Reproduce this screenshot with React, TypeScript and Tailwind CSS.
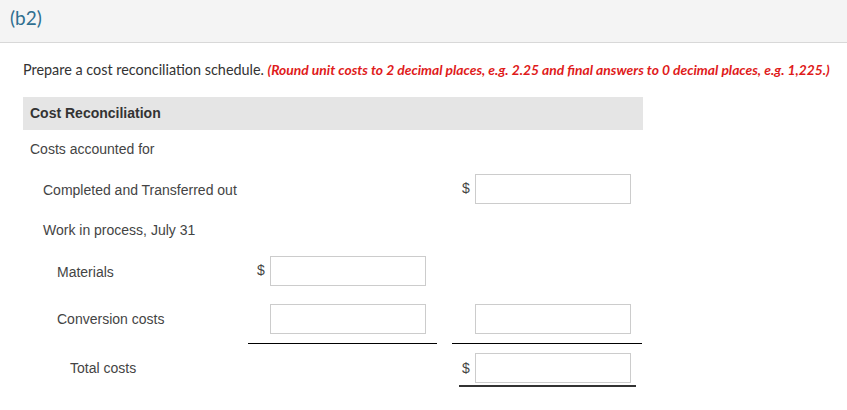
const label = 'font-["Liberation_Sans",Arial,sans-serif] text-[14px] text-[#444]'
const box = 'block h-[30px] w-[156px] border border-[#cccccc] bg-white'

function Money({ dollar }: { dollar?: boolean }) {
  return (
    <div className="flex items-center">
      <span className={`${label} w-[13px] text-[13px]`}>{dollar ? '$' : ''}</span>
      <input className={box} />
    </div>
  )
}

export default function App() {
  return (
    <div className="min-h-screen bg-white">
      <div className="h-[43px] border-b border-[#d8d8d8] bg-[#f4f4f4] pl-[10px] pt-[4px]">
        <span className='font-["Lato",sans-serif] text-[19px] text-[#2f6f90]'>(b2)</span>
      </div>

      <p className='pl-[23px] pt-[17px] font-["Lato",sans-serif] text-[14px] leading-[20px] text-[#333]'>
        <span className="text-[14.4px]">Prepare a cost reconciliation schedule.</span>{' '}
        <em className="text-[13.85px] font-bold text-[#e01b1b]">
          (Round unit costs to 2 decimal places, e.g. 2.25 and final answers to 0 decimal places, e.g. 1,225.)
        </em>
      </p>

      <div className="ml-[23px] mt-[17px] w-[620px]">
        <div className="flex h-[33px] items-center bg-[#e5e5e5] pl-[7px]">
          <span className='font-["Liberation_Sans",Arial,sans-serif] text-[14px] font-bold text-[#333]'>Cost Reconciliation</span>
        </div>

        <div className="flex h-[38px] items-center pl-[7px]">
          <span className={label}>Costs accounted for</span>
        </div>

        <div className="flex h-[41px] items-center">
          <div className="w-[439px] pl-[20px]">
            <span className={label}>Completed and Transferred out</span>
          </div>
          <Money dollar />
        </div>

        <div className="flex h-[41px] items-center pl-[20px] pt-[2px]">
          <span className={label}>Work in process, July 31</span>
        </div>

        <div className="flex h-[41px] items-center">
          <div className="w-[225px] pl-[34px]">
            <span className={label}>Materials</span>
          </div>
          <div className="pl-[9px]">
            <Money dollar />
          </div>
        </div>

        <div className="flex h-[53px]">
          <div className="flex w-[225px] items-center pl-[34px] pt-[3px]">
            <span className={label}>Conversion costs</span>
          </div>
          <div className="w-[189px] border-b border-black pl-[9px] pt-[13px]">
            <Money />
          </div>
          <div className="ml-[15px] w-[190px] border-b border-black pl-[10px] pt-[13px]">
            <Money />
          </div>
        </div>

        <div className="flex">
          <div className="flex w-[439px] items-center pl-[47px] pt-[5px]">
            <span className={label}>Total costs</span>
          </div>
          <div className="pt-[9px]">
            <Money dollar />
            <div className="-ml-[3px] mt-[2px] h-[2px] w-[177px] bg-[#333]" />
          </div>
        </div>
      </div>
    </div>
  )
}
